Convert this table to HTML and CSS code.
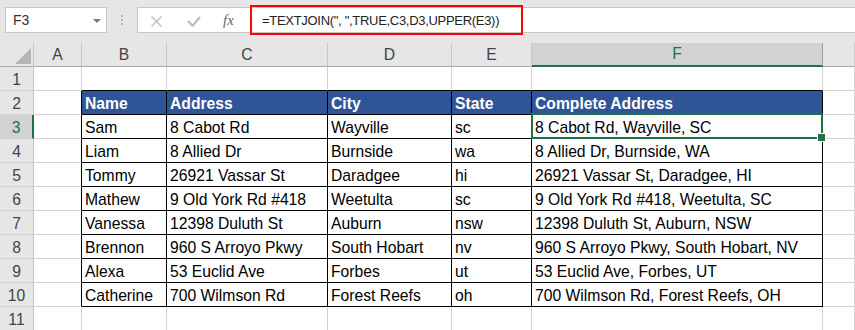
FILE: index.html
```html
<!DOCTYPE html>
<html>
<head>
<meta charset="utf-8">
<link rel="stylesheet" href="styles.css">
</head>
<body>
<div class="toolbar">
  <div class="namebox"><span>F3</span><span class="nb-arrow"></span></div>
  <div class="grip"><i></i><i></i><i></i></div>
  <div class="fxbtns">
    <span class="ico"><svg width="11" height="11" viewBox="0 0 11 11"><path d="M0.5 0.5L10.5 10.5M10.5 0.5L0.5 10.5" stroke="#bdbdbd" stroke-width="1.4" fill="none"/></svg></span>
    <span class="ico"><svg width="14" height="11" viewBox="0 0 14 11"><path d="M1 5L5.5 9.8L13 1" fill="none" stroke="#bdbdbd" stroke-width="2.2"/></svg></span>
    <span class="fx">fx</span>
  </div>
  <div class="fbar"><div class="formula">=TEXTJOIN(", ",TRUE,C3,D3,UPPER(E3))</div></div>
</div>
<div class="sheet">
  <div class="c h corner"><span class="tri"></span></div>
  <div class="c h">A</div><div class="c h">B</div><div class="c h">C</div><div class="c h">D</div><div class="c h">E</div><div class="c h hsel">F</div><div class="c h"></div>

  <div class="c rh">1</div>
  <div class="c"></div><div class="c tt"></div><div class="c tt"></div><div class="c tt"></div><div class="c tt"></div><div class="c tt"></div><div class="c"></div>

  <div class="c rh">2</div>
  <div class="c tl"></div><div class="c t th">Name</div><div class="c t th">Address</div><div class="c t th">City</div><div class="c t th">State</div><div class="c t th">Complete Address</div><div class="c"></div>

  <div class="c rh rsel">3</div>
  <div class="c tl"></div><div class="c t">Sam</div><div class="c t">8 Cabot Rd</div><div class="c t">Wayville</div><div class="c t">sc</div><div class="c t sel">8 Cabot Rd, Wayville, SC</div><div class="c"></div>

  <div class="c rh">4</div>
  <div class="c tl"></div><div class="c t">Liam</div><div class="c t">8 Allied Dr</div><div class="c t">Burnside</div><div class="c t">wa</div><div class="c t">8 Allied Dr, Burnside, WA</div><div class="c"></div>

  <div class="c rh">5</div>
  <div class="c tl"></div><div class="c t">Tommy</div><div class="c t">26921 Vassar St</div><div class="c t">Daradgee</div><div class="c t">hi</div><div class="c t">26921 Vassar St, Daradgee, HI</div><div class="c"></div>

  <div class="c rh">6</div>
  <div class="c tl"></div><div class="c t">Mathew</div><div class="c t">9 Old York Rd #418</div><div class="c t">Weetulta</div><div class="c t">sc</div><div class="c t">9 Old York Rd #418, Weetulta, SC</div><div class="c"></div>

  <div class="c rh">7</div>
  <div class="c tl"></div><div class="c t">Vanessa</div><div class="c t">12398 Duluth St</div><div class="c t">Auburn</div><div class="c t">nsw</div><div class="c t">12398 Duluth St, Auburn, NSW</div><div class="c"></div>

  <div class="c rh">8</div>
  <div class="c tl"></div><div class="c t">Brennon</div><div class="c t">960 S Arroyo Pkwy</div><div class="c t">South Hobart</div><div class="c t">nv</div><div class="c t">960 S Arroyo Pkwy, South Hobart, NV</div><div class="c"></div>

  <div class="c rh">9</div>
  <div class="c tl"></div><div class="c t">Alexa</div><div class="c t">53 Euclid Ave</div><div class="c t">Forbes</div><div class="c t">ut</div><div class="c t">53 Euclid Ave, Forbes, UT</div><div class="c"></div>

  <div class="c rh">10</div>
  <div class="c tl"></div><div class="c t">Catherine</div><div class="c t">700 Wilmson Rd</div><div class="c t">Forest Reefs</div><div class="c t">oh</div><div class="c t">700 Wilmson Rd, Forest Reefs, OH</div><div class="c"></div>

  <div class="c rh">11</div>
  <div class="c"></div><div class="c"></div><div class="c"></div><div class="c"></div><div class="c"></div><div class="c"></div><div class="c"></div>
</div>
</body>
</html>
```

FILE: styles.css
```css
* { box-sizing: border-box; }
html, body { margin: 0; padding: 0; }
body {
  width: 855px;
  height: 330px;
  overflow: hidden;
  background: #fff;
  font-family: "Liberation Sans", Arial, sans-serif;
}

.toolbar {
  height: 43px;
  background: #e6e6e6;
  display: flex;
  align-items: flex-start;
  padding-top: 7px;
}
.namebox {
  margin-left: 5px;
  width: 102px;
  height: 26px;
  background: #fff;
  border: 1px solid #c6c6c6;
  display: flex;
  align-items: center;
  justify-content: space-between;
  padding: 0 5px 0 7px;
  font-size: 14px;
  color: #333;
}
.nb-arrow {
  width: 0;
  height: 0;
  border-left: 4px solid transparent;
  border-right: 4px solid transparent;
  border-top: 4px solid #7a7a7a;
  margin-top: 1px;
}
.grip {
  width: 30px;
  height: 26px;
  display: flex;
  flex-direction: column;
  align-items: center;
  justify-content: center;
  gap: 2px;
}
.grip i {
  display: block;
  width: 2px;
  height: 2px;
  background: #b5b5b5;
}
.fxbtns {
  width: 113px;
  height: 26px;
  background: #fff;
  border: 1px solid #c6c6c6;
  border-right: none;
  display: flex;
  align-items: center;
}
.ico {
  width: 37px;
  height: 100%;
  display: flex;
  justify-content: center;
  align-items: center;
  padding-top: 2px;
}
.fx {
  width: 37px;
  padding-right: 4px;
  text-align: center;
  font-family: "Liberation Serif", serif;
  font-style: italic;
  font-size: 15px;
  color: #666;
}
.fbar {
  flex: 1;
  height: 26px;
  background: #fff;
  border-top: 1px solid #c6c6c6;
  border-bottom: 1px solid #c6c6c6;
  display: flex;
  align-items: center;
}
.formula {
  flex: none;
  width: 273px;
  height: 30px;
  border: 2px solid #f00;
  padding-left: 10px;
  display: flex;
  align-items: center;
  font-size: 13px;
  letter-spacing: -0.3px;
  color: #222;
  white-space: pre;
}

.sheet {
  display: grid;
  grid-template-columns: 34px 48px 85px 161px 124px 80px 291px 32px;
  grid-auto-rows: 24px;
}
.c {
  border-right: 1px solid #d4d4d4;
  border-bottom: 1px solid #d4d4d4;
  display: flex;
  align-items: flex-end;
  padding: 0 3px 1px;
  font-size: 15.7px;
  line-height: 18px;
  white-space: nowrap;
  overflow: hidden;
  color: #000;
}
.h {
  background: #e6e6e6;
  border-right-color: #c6c6c6;
  border-bottom-color: #ababab;
  align-items: center;
  justify-content: center;
  padding: 0;
  color: #444;
}
.rh {
  background: #e6e6e6;
  border-right-color: #c6c6c6;
  border-bottom-color: #d0d0d0;
  align-items: center;
  justify-content: center;
  padding: 2px 0 0;
  color: #444;
}
.corner {
  justify-content: flex-end;
  align-items: flex-end;
  padding: 0 2px 2px 0;
}
.tri {
  width: 16px;
  height: 16px;
  background: #b5b5b5;
  clip-path: polygon(100% 0, 100% 100%, 0 100%);
}
.hsel {
  background: #d2d2d2;
  color: #217346;
  border-bottom: 2px solid #217346;
  border-right-color: #9e9e9e;
}
.rsel {
  background: #d2d2d2;
  color: #217346;
  border-right: 2px solid #217346;
}
.tt { border-bottom-color: #000; }
.tl { border-right-color: #000; }
.t {
  border-right-color: #000;
  border-bottom-color: #000;
}
.th {
  background: #2f5597;
  color: #fff;
  font-weight: bold;
}
.sel {
  position: relative;
  z-index: 2;
  overflow: visible;
}
.sel::after {
  content: "";
  position: absolute;
  left: -1px;
  top: -2px;
  right: -1px;
  bottom: -1px;
  border: 2px solid #217346;
}
.sel::before {
  content: "";
  position: absolute;
  right: -4px;
  bottom: -4px;
  width: 7px;
  height: 7px;
  background: #217346;
  border: 1px solid #fff;
  z-index: 1;
}
```
